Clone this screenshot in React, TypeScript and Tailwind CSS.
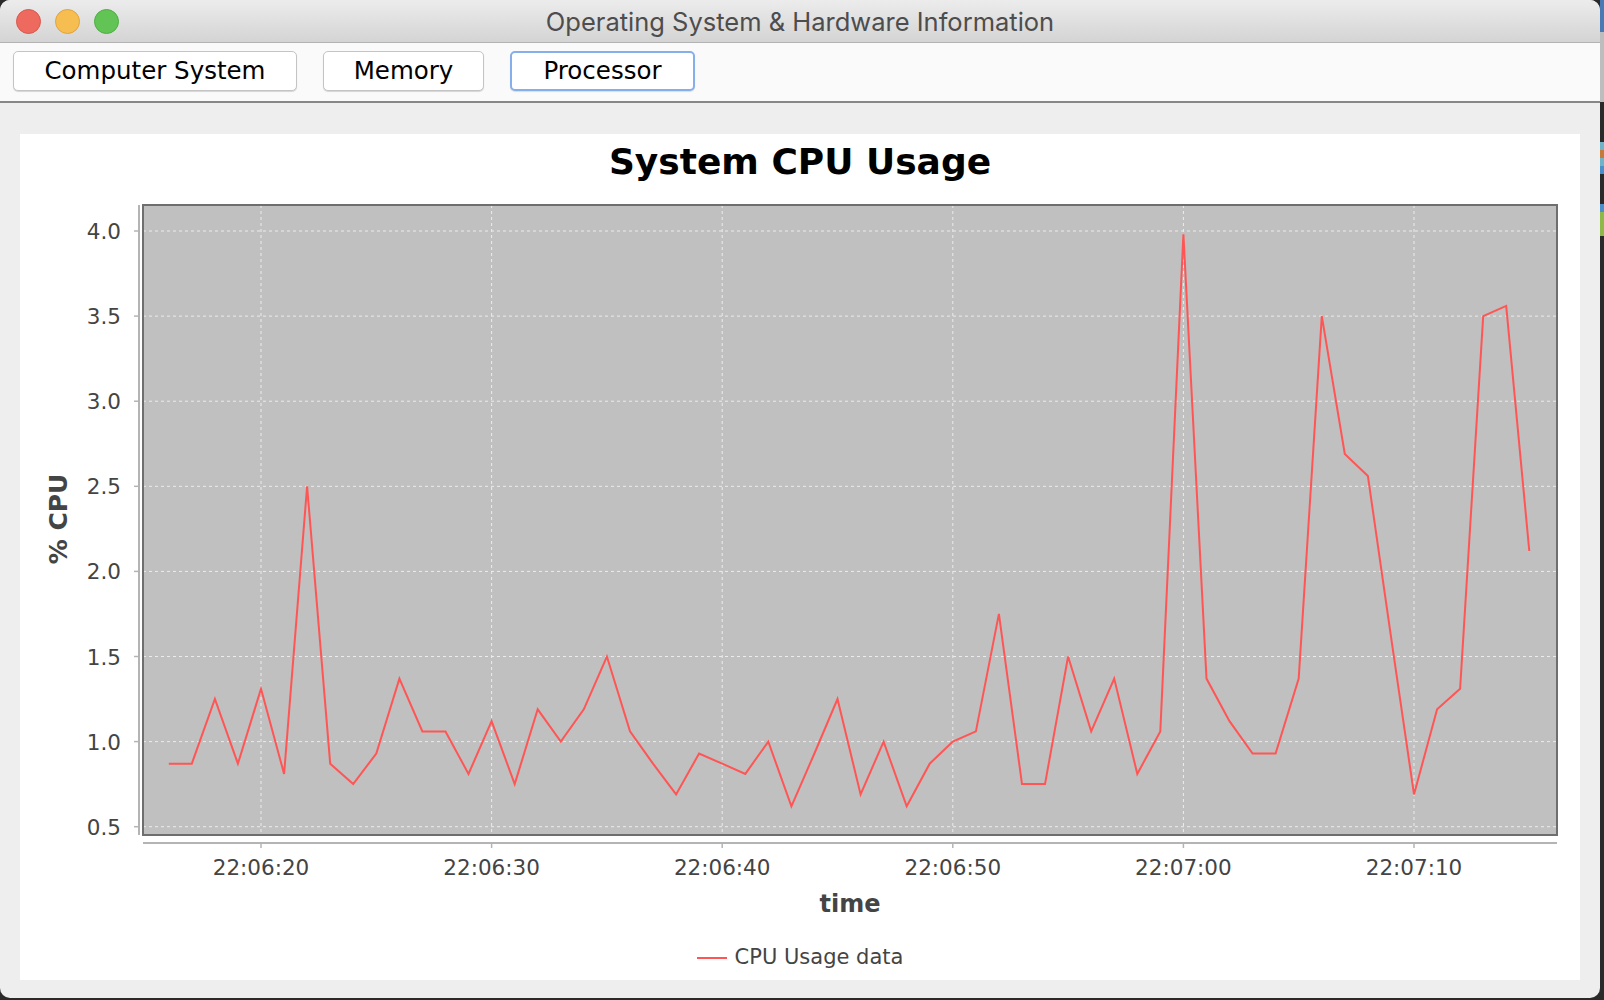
import React from "react";

// cpu samples, one per second from 22:06:16 to 22:07:15
const cpu = [
  0.87, 0.87, 1.25, 0.87, 1.31, 0.81, 2.5, 0.87, 0.75, 0.93, 1.37, 1.06, 1.06, 0.81, 1.12,
  0.75, 1.19, 1.0, 1.19, 1.5, 1.06, 0.87, 0.69, 0.93, 0.87, 0.81, 1.0, 0.62, 0.93, 1.25,
  0.69, 1.0, 0.62, 0.87, 1.0, 1.06, 1.75, 0.75, 0.75, 1.5, 1.06, 1.37, 0.81, 1.06, 3.98,
  1.37, 1.12, 0.93, 0.93, 1.37, 3.5, 2.69, 2.56, 1.62, 0.69, 1.19, 1.31, 3.5, 3.56, 2.12,
];

const PX0 = 123;
const PX1 = 1537;
const PY0 = 15;
const PY1 = 645;

const yOf = (v: number) => 41 + (4 - v) * 170.2;
const xOf = (s: number) => 241 + (s - 20) * 23.06;

const yTicks = [4.0, 3.5, 3.0, 2.5, 2.0, 1.5, 1.0, 0.5];
const xTicks = [
  { s: 20, label: "22:06:20" },
  { s: 30, label: "22:06:30" },
  { s: 40, label: "22:06:40" },
  { s: 50, label: "22:06:50" },
  { s: 60, label: "22:07:00" },
  { s: 70, label: "22:07:10" },
];

function CpuChart() {
  const points = cpu.map((v, i) => `${xOf(16 + i).toFixed(1)},${yOf(v).toFixed(1)}`).join(" ");
  return (
    <svg width={1560} height={745} viewBox="0 0 1560 745" className="block">
      <rect x={PX0} y={PY0} width={PX1 - PX0} height={PY1 - PY0} fill="#c0c0c0" />
      {yTicks.map((v) => (
        <line
          key={v}
          x1={PX0}
          x2={PX1}
          y1={yOf(v)}
          y2={yOf(v)}
          stroke="#ececec"
          strokeWidth={1}
          strokeDasharray="3 3"
        />
      ))}
      {xTicks.map((t) => (
        <line
          key={t.s}
          x1={xOf(t.s)}
          x2={xOf(t.s)}
          y1={PY0}
          y2={PY1}
          stroke="#ececec"
          strokeWidth={1}
          strokeDasharray="3 3"
        />
      ))}
      <polyline points={points} fill="none" stroke="#ff5555" strokeWidth={2} strokeLinejoin="miter" />
      <rect
        x={PX0}
        y={PY0}
        width={PX1 - PX0}
        height={PY1 - PY0}
        fill="none"
        stroke="#6e6e6e"
        strokeWidth={2}
      />

      {/* y axis */}
      <line x1={119} x2={119} y1={PY0} y2={PY1} stroke="#b4b4b4" strokeWidth={2} />
      {yTicks.map((v) => (
        <g key={v}>
          <line x1={114} x2={119} y1={yOf(v)} y2={yOf(v)} stroke="#b4b4b4" strokeWidth={1.5} />
          <text
            x={101}
            y={yOf(v) + 8}
            textAnchor="end"
            fontFamily="'DejaVu Sans', sans-serif"
            fontSize={21.5}
            fill="#444444"
          >
            {v.toFixed(1)}
          </text>
        </g>
      ))}
      <text
        transform="translate(47 329) rotate(-90)"
        textAnchor="middle"
        fontFamily="'DejaVu Sans', sans-serif"
        fontWeight="bold"
        fontSize={25}
        fill="#444444"
      >
        % CPU
      </text>

      {/* x axis */}
      <line x1={PX0} x2={PX1} y1={653} y2={653} stroke="#b4b4b4" strokeWidth={2} />
      {xTicks.map((t) => (
        <g key={t.s}>
          <line x1={xOf(t.s)} x2={xOf(t.s)} y1={653} y2={658} stroke="#b4b4b4" strokeWidth={1.5} />
          <text
            x={xOf(t.s)}
            y={685}
            textAnchor="middle"
            fontFamily="'DejaVu Sans', sans-serif"
            fontSize={21.5}
            fill="#444444"
          >
            {t.label}
          </text>
        </g>
      ))}
      <text
        x={830}
        y={722}
        textAnchor="middle"
        fontFamily="'DejaVu Sans', sans-serif"
        fontWeight="bold"
        fontSize={24}
        fill="#444444"
      >
        time
      </text>
    </svg>
  );
}

function TabButton({ label, width, active }: { label: string; width: string; active?: boolean }) {
  return (
    <button
      className={
        active
          ? `${width} h-[40px] rounded-[5px] bg-white border-2 border-[#86aeea] shadow-[0_1px_1px_rgba(0,0,0,0.12)] text-[24.5px] text-black flex items-center justify-center`
          : `${width} h-[40px] rounded-[5px] bg-white border border-[#c4c4c4] shadow-[0_1px_1px_rgba(0,0,0,0.15)] text-[24.5px] text-black flex items-center justify-center`
      }
      style={{ fontFamily: "'DejaVu Sans', sans-serif" }}
    >
      {label}
    </button>
  );
}

export default function App() {
  return (
    <div className="w-[1604px] h-[1000px] bg-[#2a2a2a] flex overflow-hidden">
      <div className="w-[1600px] h-[998px] flex flex-col rounded-[10px] overflow-hidden bg-[#eeeeee] shrink-0">
        {/* title bar */}
        <div className="h-[43px] shrink-0 bg-gradient-to-b from-[#ececec] to-[#d4d4d4] border-b border-[#b3b3b3] flex items-center relative">
          <div className="flex items-center gap-[14px] pl-[16px]">
            <span className="w-[25px] h-[25px] rounded-full bg-[#ee6a5f] border border-[#d8574d]" />
            <span className="w-[25px] h-[25px] rounded-full bg-[#f6be50] border border-[#dfa33d]" />
            <span className="w-[25px] h-[25px] rounded-full bg-[#61c454] border border-[#4fad43]" />
          </div>
          <div
            className="absolute inset-0 pt-[3px] flex items-center justify-center text-[25.5px] text-[#4d4d4d]"
            style={{ fontFamily: "Inter, 'Noto Sans', sans-serif" }}
          >
            Operating System &amp; Hardware Information
          </div>
        </div>

        {/* tab buttons */}
        <div className="h-[60px] shrink-0 bg-[#fafafa] border-b-2 border-[#878787] flex items-start pt-[8px] pl-[13px] gap-[26px]">
          <TabButton label="Computer System" width="w-[284px]" />
          <TabButton label="Memory" width="w-[161px]" />
          <TabButton label="Processor" width="w-[185px]" active />
        </div>

        {/* chart panel */}
        <div className="flex-1 px-[20px] pt-[31px] pb-[18px]">
          <div className="w-[1560px] h-[846px] bg-white flex flex-col">
            <div
              className="h-[56px] flex items-center justify-center text-[36px] font-bold text-black"
              style={{ fontFamily: "'DejaVu Sans', sans-serif" }}
            >
              System CPU Usage
            </div>
            <CpuChart />
            <div
              className="h-[45px] flex items-center justify-center gap-[8px] text-[21px] text-[#444444]"
              style={{ fontFamily: "'DejaVu Sans', sans-serif" }}
            >
              <span className="w-[30px] h-[2px] bg-[#ff5555]" />
              <span>CPU Usage data</span>
            </div>
          </div>
        </div>
      </div>

      {/* bit of desktop behind the window */}
      <div className="w-[4px] flex flex-col">
        <div className="h-[32px] bg-[#4a79b3]" />
        <div className="h-[70px] bg-[#bdbdbd]" />
        <div className="h-[40px] bg-[#2a2a2a]" />
        <div className="h-[8px] bg-[#6fb3c9]" />
        <div className="h-[8px] bg-[#c47a3a]" />
        <div className="h-[8px] bg-[#6fb3c9]" />
        <div className="h-[8px] bg-[#4a8fc9]" />
        <div className="h-[30px]" />
        <div className="h-[8px] bg-[#4a8fc9]" />
        <div className="h-[8px] bg-[#8fb84a]" />
        <div className="h-[8px] bg-[#8fb84a]" />
        <div className="h-[8px] bg-[#8fb84a]" />
      </div>
    </div>
  );
}
